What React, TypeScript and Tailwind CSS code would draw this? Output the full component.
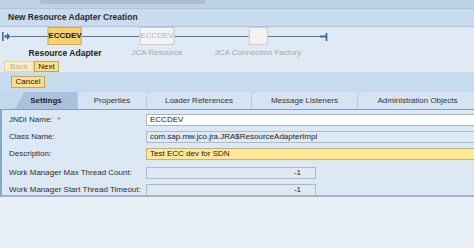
import React from 'react';

const font = { fontFamily: '"Liberation Sans", Arial, sans-serif' };

const steps = [
  { label: 'Resource Adapter', box: 'ECCDEV', state: 'active', boxW: 'w-[34px]', center: 'left-[65px]' },
  { label: 'JCA Resource', box: 'ECCDEV', state: 'done', boxW: 'w-[35px]', center: 'left-[157px]' },
  { label: 'JCA Connection Factory', box: '', state: 'todo', boxW: 'w-[19px]', center: 'left-[258px]' },
];

const tabs = [
  { name: 'Settings', w: 'w-[62px]', active: true },
  { name: 'Properties', w: 'w-[69px]' },
  { name: 'Loader References', w: 'w-[105px]' },
  { name: 'Message Listeners', w: 'w-[106px]' },
  { name: 'Administration Objects', w: 'w-[120px]' },
];

const Roadmap = () => (
  <div className="relative h-[45px] bg-[#dfeaf5]">
    {/* start marker */}
    <svg className="absolute left-[2px] top-[5px]" width="9" height="9" viewBox="0 0 9 9">
      <rect x="0" y="0" width="1.6" height="9" fill="#3c6ea5" />
      <path d="M2.5 3.2 H5 V1 L8.6 4.5 L5 8 V5.8 H2.5 Z" fill="#3c6ea5" />
    </svg>
    <div className="absolute left-[11px] top-[9px] h-px w-[312px] bg-[#4a74a3]" />
    {/* end marker */}
    <svg className="absolute left-[320px] top-[5px]" width="8" height="9" viewBox="0 0 8 9">
      <rect x="0" y="3.5" width="6" height="2" fill="#3c6ea5" />
      <rect x="5.6" y="1" width="1.8" height="8" fill="#3c6ea5" />
    </svg>
    {steps.map(s => (
      <div key={s.label} className={`absolute top-0 ${s.center} -translate-x-1/2 flex flex-col items-center`}>
        <div
          className={`${s.boxW} h-[18px] flex items-center justify-center text-[8px] border ${
            s.state === 'active'
              ? 'bg-[#f9d06a] border-[#d6ac4c] text-[#1a1a1a] font-bold'
              : s.state === 'done'
              ? 'bg-[#f3f3f1] border-[#c9cdd2] text-[#b5b5b5]'
              : 'bg-[#f5f1ec] border-[#c9cdd2] h-[17px]'
          }`}
        >
          {s.box}
        </div>
        <div
          className={`mt-[2px] whitespace-nowrap leading-[12px] ${
            s.state === 'active' ? 'text-[8.5px] font-bold text-[#1f1f1f]' : 'text-[8px] text-[#a8a8a8]'
          }`}
        >
          {s.label}
        </div>
      </div>
    ))}
    <div className="absolute left-[4px] top-[34px] flex">
      <div className="h-[11px] w-[30px] flex items-center justify-center bg-[#f7edc7] border border-[#e3d59f] text-[8px] text-[#bbb39a]">
        Back
      </div>
      <div className="h-[11px] w-[25px] flex items-center justify-center bg-[#f9e08e] border border-[#c6a457] text-[8px] text-[#1a1a1a]">
        Next
      </div>
    </div>
  </div>
);

const Field = ({ label, value, kind, req, short, extra }: { label: string; value: string; kind: string; req?: boolean; short?: boolean; extra?: string }) => (
  <div className={`flex items-center h-[17px] ${extra || ''}`}>
    <div className="w-[144px] pl-[7px] text-[8px] text-[#2f2f2f] whitespace-nowrap">
      {label}
      {req && <span className="ml-[5px] text-[#e0303a]">*</span>}
    </div>
    <div
      className={`h-[12px] flex items-center text-[8px] text-[#222] border ${
        short ? 'w-[170px] justify-end pr-[14px]' : 'flex-1 pl-[3px] -mr-[2px]'
      } ${
        kind === 'white'
          ? 'bg-white border-[#a9b4c0]'
          : kind === 'yellow'
          ? 'bg-[#fde995] border-[#bfb37c]'
          : 'bg-[#dfe9f3] border-[#aeb9c5]'
      }`}
    >
      {value}
    </div>
  </div>
);

export default function App() {
  return (
    <div className="w-[474px] h-[248px] overflow-hidden bg-[#e8eff8] flex flex-col" style={font}>
      {/* top strip */}
      <div className="h-[9px] bg-[#bdd1e7] border-b border-[#aec4dc] relative">
        <div className="absolute left-[40px] top-0 h-[4px] w-[165px] bg-[#aebdd0] rounded-b-[2px]" />
      </div>
      {/* title */}
      <div className="h-[18px] bg-[#c9dcef] border-b border-[#a9c2dc] flex items-center pl-[8px] text-[8.5px] font-bold text-[#2a2a2a]">
        New Resource Adapter Creation
      </div>
      <Roadmap />
      {/* toolbar */}
      <div className="h-[19px] bg-[#c7dbef] flex items-center pl-[11px]">
        <div className="h-[12px] w-[34px] flex items-center justify-center bg-[#f9e08e] border border-[#c6a457] text-[8px] text-[#1a1a1a]">
          Cancel
        </div>
      </div>
      {/* tabs */}
      <div className="h-[18px] bg-[#c5d9ed] flex items-end pl-[15px]">
        {tabs.map(t => (
          <div
            key={t.name}
            className={`${t.w} h-[17px] shrink-0 flex items-center justify-center text-[8px] whitespace-nowrap ${
              t.active
                ? 'bg-[#a8c2de] font-bold text-[#1d1d1d] [clip-path:polygon(9px_0,100%_0,100%_100%,0_100%)]'
                : 'bg-[#d6e4f2] text-[#333] border-l border-[#b5c9de] [clip-path:polygon(5px_0,100%_0,100%_100%,0_100%,0_4px)]'
            }`}
          >
            {t.name}
          </div>
        ))}
      </div>
      {/* form */}
      <div className="h-[88px] bg-[#dce8f4] border-t border-[#7f9fc4] border-l-2 border-l-[#86a8cc] border-b-2 border-b-[#9fb4cc] pt-[1px]">
        <Field label="JNDI Name:" value="ECCDEV" kind="white" req />
        <Field label="Class Name:" value="com.sap.mw.jco.jra.JRA$ResourceAdapterImpl" kind="grey" />
        <Field label="Description:" value="Test ECC dev for SDN" kind="yellow" />
        <Field label="Work Manager Max Thread Count:" value="-1" kind="grey" short extra="mt-[2px]" />
        <Field label="Work Manager Start Thread Timeout:" value="-1" kind="grey" short />
      </div>
      <div className="flex-1 bg-[#e9f0f8]" />
    </div>
  );
}
